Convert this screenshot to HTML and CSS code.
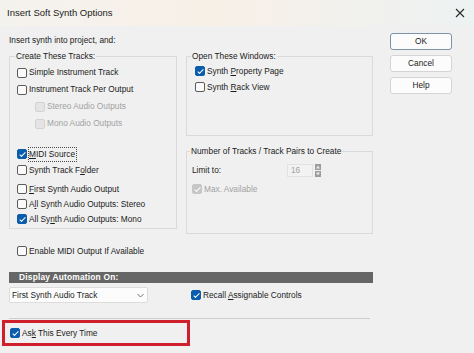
FILE: index.html
```html
<!DOCTYPE html>
<html lang="en">

<head>
    <meta charset="UTF-8">
    <meta name="viewport" content="width=device-width, initial-scale=1.0">
    <title>Insert Soft Synth Options</title>
    <link rel="stylesheet" href="styles.css">
</head>

<body>
    <div class="window">
        <div class="titlebar">
            <span class="title">Insert Soft Synth Options</span>
            <svg class="close" width="10" height="10" viewBox="0 0 10 10">
                <path d="M1 1 L9 9 M9 1 L1 9" stroke="#2b2b2b" stroke-width="1.1" fill="none"/>
            </svg>
        </div>

        <div class="body">
            <div class="main">
                <div class="intro">Insert synth into project, and:</div>

                <div class="groups">
                    <fieldset class="group tracks">
                        <legend>Create These Tracks:</legend>
                        <div class="rows tall">
                            <div class="check"><span class="box"></span><span>Simple Instrument Track</span></div>
                            <div class="check"><span class="box"></span><span>Instrument Track Per Output</span></div>
                            <div class="check sub off"><span class="box"></span><span>Stereo Audio Outputs</span></div>
                            <div class="check sub off"><span class="box"></span><span>Mono Audio Outputs</span></div>
                        </div>
                        <div class="rows mid">
                            <div class="check"><span class="box on"></span><span class="focus"><u>M</u>IDI Source</span></div>
                            <div class="check"><span class="box"></span><span>Synth Track F<u>o</u>lder</span></div>
                        </div>
                        <div class="rows short">
                            <div class="check"><span class="box"></span><span><u>F</u>irst Synth Audio Output</span></div>
                            <div class="check"><span class="box"></span><span>A<u>l</u>l Synth Audio Outputs: Stereo</span></div>
                            <div class="check"><span class="box on"></span><span>All Sy<u>n</u>th Audio Outputs: Mono</span></div>
                        </div>
                    </fieldset>

                    <div class="side">
                        <fieldset class="group windows">
                            <legend>Open These Windows:</legend>
                            <div class="check"><span class="box on"></span><span>Synth <u>P</u>roperty Page</span></div>
                            <div class="check"><span class="box"></span><span>Synth <u>R</u>ack View</span></div>
                        </fieldset>

                        <fieldset class="group count">
                            <legend>Number of Tracks / Track Pairs to Create</legend>
                            <div class="limit">
                                <span class="limit-label">Limit to:</span>
                                <span class="field">16</span>
                                <svg class="spin" width="6" height="13" viewBox="0 0 6 13">
                                    <rect x="0" y="0" width="6" height="6" fill="#9c9c9c"/>
                                    <rect x="0" y="7" width="6" height="6" fill="#9c9c9c"/>
                                    <path d="M3 1.5 L5 4.5 L1 4.5 Z" fill="#e8e8e8"/>
                                    <path d="M1 8.5 L5 8.5 L3 11.5 Z" fill="#e8e8e8"/>
                                </svg>
                            </div>
                            <div class="check off"><span class="box on"></span><span>Max. Available</span></div>
                        </fieldset>
                    </div>
                </div>

                <div class="check midi-out"><span class="box"></span><span>Enable MIDI Output If Available</span></div>

                <div class="bar">Display Automation On:</div>

                <div class="auto-row">
                    <div class="select">
                        <span>First Synth Audio Track</span>
                        <svg width="7" height="5" viewBox="0 0 7 5">
                            <path d="M0.5 1 L3.5 4 L6.5 1" stroke="#6f6f6f" stroke-width="1" fill="none"/>
                        </svg>
                    </div>
                    <div class="check recall"><span class="box on"></span><span>Recall <u>A</u>ssignable Controls</span></div>
                </div>

                <div class="sep"></div>
            </div>

            <div class="buttons">
                <div class="btn default">OK</div>
                <div class="btn">Cancel</div>
                <div class="btn">Help</div>
            </div>
        </div>

        <div class="footer">
            <div class="check"><span class="box on"></span><span>As<u>k</u> This Every Time</span></div>
        </div>
    </div>
</body>

</html>
```

FILE: styles.css
```css
:root {
    --bg: #f0f0f0;
    --text: #1b1b1b;
    --frame: #dadada;
    --blue: #0b5cad;
    --muted: #a2a2a2;
}

* {
    margin: 0;
    padding: 0;
    box-sizing: border-box;
}

body {
    background: var(--bg);
    color: var(--text);
    font-family: "Liberation Sans", Arial, sans-serif;
    font-size: 8.3px;
    line-height: 11px;
}

.window {
    width: 474px;
    height: 353px;
    overflow: hidden;
}

.titlebar {
    height: 26px;
    display: flex;
    align-items: center;
    justify-content: space-between;
    padding: 0 9px 1px 7px;
    background: linear-gradient(90deg, #f4f2ee 0%, #f8f0e7 45%, #f2f1ed 72%, #edf2f2 100%);
}

.title {
    font-size: 9.5px;
}

.body {
    display: flex;
    align-items: flex-start;
    padding-left: 9px;
}

.main {
    width: 364px;
    padding-top: 9px;
}

.intro {
    height: 11px;
}

.groups {
    display: flex;
    align-items: flex-start;
    gap: 9px;
    margin-top: 5px;
}

/* group boxes */
.group {
    border: 1px solid var(--frame);
    margin: 0;
    min-width: 0;
}

.group legend {
    padding: 0 1px;
    line-height: 11px;
}

.tracks {
    width: 168px;
    padding: 2px 0 1.5px 7px;
}

.tracks legend {
    margin-left: -2px;
}

.side {
    width: 187px;
    display: flex;
    flex-direction: column;
}

.windows {
    padding: 1px 0 40px 8px;
}

.windows legend {
    margin-left: -4px;
}

.count {
    margin-top: 10px;
    padding: 5px 0 36px 5px;
}

.count legend {
    margin-left: -2px;
}

/* checkboxes */
.check {
    display: flex;
    align-items: center;
    height: 16px;
    white-space: nowrap;
}

.rows.tall .check {
    height: 17px;
}

.rows.mid {
    margin-top: 14px;
}

.rows.short {
    margin-top: 3.5px;
}

.rows.short .check {
    height: 15px;
}

.check.sub {
    padding-left: 18px;
}

.box {
    flex: none;
    width: 10px;
    height: 10px;
    margin-right: 2px;
    border: 1px solid #5a5a5a;
    border-radius: 2px;
    background: #fbfbfb;
    position: relative;
}

.box.on {
    background: var(--blue);
    border-color: var(--blue);
}

.box.on::after {
    content: "";
    position: absolute;
    left: 2.6px;
    top: 0.6px;
    width: 2.4px;
    height: 5px;
    border: solid #fff;
    border-width: 0 1.2px 1.2px 0;
    transform: rotate(45deg);
}

.check.off {
    color: var(--muted);
}

.check.off .box {
    background: #e4e4e4;
    border-color: #d2d2d2;
}

.check.off .box.on {
    background: #c6c6c6;
    border-color: #c6c6c6;
}

.focus {
    outline: 1px dotted #4a4a4a;
    padding: 1px 1px 1px 0;
}

u {
    text-underline-offset: 1px;
}

/* number of tracks */
.limit {
    display: flex;
    align-items: center;
    height: 16px;
}

.limit-label {
    width: 95px;
}

.field {
    width: 26px;
    height: 13px;
    padding-left: 3px;
    border: 1px solid #e2e2e2;
    background: #f2f2f2;
    color: var(--muted);
    line-height: 11px;
}

.spin {
    margin-left: 2px;
}

.count .check {
    margin-top: 3px;
}

/* lower part */
.midi-out {
    margin-top: 9px;
    padding-left: 8px;
}

.bar {
    margin-top: 13px;
    height: 11px;
    background: #666;
    color: #fff;
    font-weight: bold;
    font-size: 8.4px;
    letter-spacing: 0.2px;
    padding-left: 10px;
    line-height: 11px;
}

.auto-row {
    display: flex;
    align-items: center;
    margin-top: 4px;
    height: 16px;
}

.select {
    width: 139px;
    height: 16px;
    display: flex;
    align-items: center;
    justify-content: space-between;
    padding: 0 3px 0 2px;
    border: 1px solid #dcdcdc;
    border-radius: 2px;
    background: #fcfcfc;
}

.recall {
    margin-left: 43px;
}

.sep {
    margin-top: 15px;
    width: 361px;
    height: 1px;
    background: #cdcdcd;
}

/* buttons */
.buttons {
    margin-left: 17px;
    padding-top: 7px;
    display: flex;
    flex-direction: column;
    gap: 5px;
}

.btn {
    width: 62px;
    height: 17px;
    display: flex;
    align-items: center;
    justify-content: center;
    border: 1px solid #d4d4d4;
    border-radius: 3px;
    background: #fcfcfc;
}

.btn.default {
    border-color: #7d93a8;
}

/* highlighted option */
.footer {
    margin: 1px 0 0 2px;
    width: 188px;
    height: 26px;
    border: 3px solid #cf1f2d;
    padding-left: 5px;
    display: flex;
    align-items: center;
}
```
